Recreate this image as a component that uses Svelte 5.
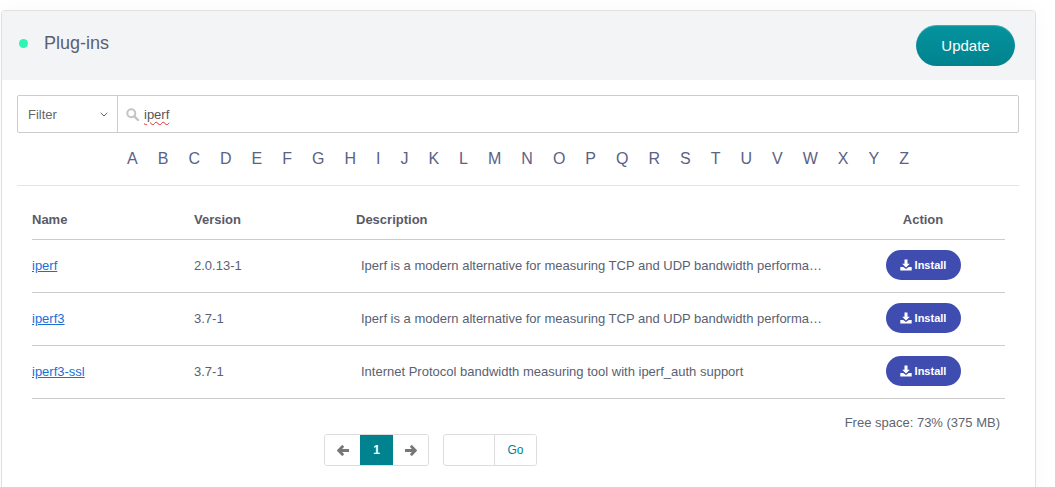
<script lang="ts">
	const letters = 'ABCDEFGHIJKLMNOPQRSTUVWXYZ'.split('');
	const desc = 'Iperf is a modern alternative for measuring TCP and UDP bandwidth performa…';
	const plugins = [
		{ name: 'iperf', version: '2.0.13-1', description: desc },
		{ name: 'iperf3', version: '3.7-1', description: desc },
		{ name: 'iperf3-ssl', version: '3.7-1', description: 'Internet Protocol bandwidth measuring tool with iperf_auth support' }
	];
</script>

<div class="card">
	<header class="head">
		<div class="title"><span class="dot"></span>Plug-ins</div>
		<button class="update">Update</button>
	</header>

	<div class="body">
		<div class="search">
			<div class="filter">
				<span>Filter</span>
				<svg width="8" height="5" viewBox="0 0 8 5"><path d="M.7.8 4 4l3.3-3.200" fill="none" stroke="#666" stroke-width="1" /></svg>
			</div>
			<div class="query">
				<svg width="13" height="13" viewBox="0 0 13 13"><circle cx="5.300" cy="5.300" r="4" fill="none" stroke="#c4c4c4" stroke-width="2" /><path d="M8.300 8.300 12 12" stroke="#c4c4c4" stroke-width="2.400" stroke-linecap="round" /></svg>
				<span class="typed">iperf</span>
			</div>
		</div>

		<nav class="letters">
			{#each letters as letter}
				<span>{letter}</span>
			{/each}
		</nav>

		<div class="table">
			<div class="row top">
				<div class="name">Name</div>
				<div class="ver">Version</div>
				<div class="desc">Description</div>
				<div class="action">Action</div>
			</div>
			{#each plugins as plugin}
				<div class="row">
					<div class="name"><a href="#{plugin.name}">{plugin.name}</a></div>
					<div class="ver">{plugin.version}</div>
					<div class="desc">{plugin.description}</div>
					<div class="action">
						<button class="install">
							<svg width="12" height="12" viewBox="0 0 12 12"><path d="M4.500.5h3v4.300h2.300L6 8.500 2.200 4.800h2.300z" fill="#fff" /><path d="M.3 8h2.900L6 10l2.800-2h2.900v3.500H.3z" fill="#fff" /></svg>
							Install
						</button>
					</div>
				</div>
			{/each}
		</div>

		<div class="free">Free space: 73% (375 MB)</div>

		<div class="pager">
			<div class="pages">
				<button class="arrow" aria-label="Previous">
					<svg width="12" height="11" viewBox="0 0 12 11"><path d="M6.200.8 1.800 5.500l4.400 4.700M2.500 5.500h9.500" fill="none" stroke="#777" stroke-width="2.800" /></svg>
				</button>
				<button class="current">1</button>
				<button class="arrow" aria-label="Next">
					<svg width="12" height="11" viewBox="0 0 12 11"><path d="M5.800.8l4.400 4.700-4.400 4.700M9.500 5.500H0" fill="none" stroke="#777" stroke-width="2.800" /></svg>
				</button>
			</div>
			<div class="goto">
				<div class="box"></div>
				<button class="go">Go</button>
			</div>
		</div>
	</div>
</div>

<style>
	:global(body) {
		background: #fff;
		font-family: "Liberation Sans", Arial, sans-serif;
		overflow: hidden;
	}
	.card {
		box-sizing: border-box;
		width: 1035px;
		margin: 10px 0 0 1px;
		border: 1px solid #e0e0e0;
		border-radius: 4px;
		background: #fff;
		box-shadow: 0 0 20px rgba(0, 0, 0, 0.03);
		color: #5a5f73;
	}
	.head {
		display: flex;
		align-items: center;
		justify-content: space-between;
		height: 69px;
		padding: 0 20px 0 17px;
		background: #f3f4f6;
		border-radius: 4px 4px 0 0;
	}
	.title {
		display: flex;
		align-items: center;
		gap: 16px;
		margin-top: -4px;
		font-size: 18px;
		color: #5a6072;
	}
	.dot {
		width: 9px;
		height: 9px;
		border-radius: 50%;
		background: #2df5b4;
	}
	.update {
		width: 99px;
		height: 41px;
		border: 0;
		border-radius: 21px;
		background: linear-gradient(#05939d, #00838f);
		box-shadow: inset 0 1px 1px rgba(255, 255, 255, 0.25);
		color: #fff;
		font: 15px "Liberation Sans", Arial, sans-serif;
	}
	.body {
		padding: 15px 16px 40px 15px;
	}
	.search {
		display: flex;
		height: 38px;
		box-sizing: border-box;
		border: 1px solid #ccc;
		border-radius: 2px;
		font-size: 13px;
	}
	.filter {
		display: flex;
		align-items: center;
		justify-content: space-between;
		box-sizing: border-box;
		width: 100px;
		padding: 0 9px 0 10px;
		border-right: 1px solid #ccc;
		color: #666;
	}
	.query {
		display: flex;
		align-items: center;
		gap: 5px;
		padding-left: 8px;
		color: #555;
	}
	.typed {
		text-decoration: underline wavy #e03030 1px;
		text-underline-offset: 2px;
	}
	.letters {
		display: flex;
		justify-content: center;
		gap: 20px;
		height: 52px;
		align-items: center;
		border-bottom: 1px solid #e5e5e5;
		font-size: 16px;
		color: #5a6285;
	}
	.table {
		margin: 0 14px 0 15px;
		font-size: 13px;
	}
	.row {
		display: grid;
		box-sizing: border-box;
		grid-template-columns: 162px 162px 1fr 164px;
		align-items: center;
		height: 53px;
		padding-bottom: 2px;
		border-bottom: 1px solid #ccc;
	}
	.row.top {
		align-items: end;
		height: 54px;
		padding-bottom: 12px;
		font-weight: 700;
		color: #5a5a66;
	}
	.row.top .desc {
		padding-left: 0;
	}
	.desc {
		padding-left: 5px;
		white-space: nowrap;
	}
	.name a {
		color: #1a6fd6;
	}
	.action {
		display: flex;
		justify-content: center;
	}
	.install {
		display: flex;
		align-items: center;
		justify-content: center;
		gap: 3px;
		width: 75px;
		height: 30px;
		border: 0;
		border-radius: 15px;
		background: #3f4db0;
		color: #fff;
		font: 700 11px "Liberation Sans", Arial, sans-serif;
	}
	.free {
		padding: 16px 19px 0 0;
		text-align: right;
		font-size: 13px;
		color: #5f6470;
	}
	.pager {
		display: flex;
		gap: 14px;
		margin: 4px 0 0 307px;
	}
	.pages, .goto {
		display: flex;
		height: 32px;
		box-sizing: border-box;
		border: 1px solid #ddd;
		border-radius: 3px;
		overflow: hidden;
	}
	.pager button {
		border: 0;
		padding: 0;
		background: #fff;
		font: 12px "Liberation Sans", Arial, sans-serif;
	}
	.arrow {
		display: flex;
		align-items: center;
		justify-content: center;
		width: 35px;
	}
	.pager .current {
		width: 33px;
		background: #00838f;
		color: #fff;
		font-weight: 700;
	}
	.box {
		width: 50px;
		border-right: 1px solid #ddd;
	}
	.pager .go {
		width: 41px;
		color: #00838f;
	}
</style>
